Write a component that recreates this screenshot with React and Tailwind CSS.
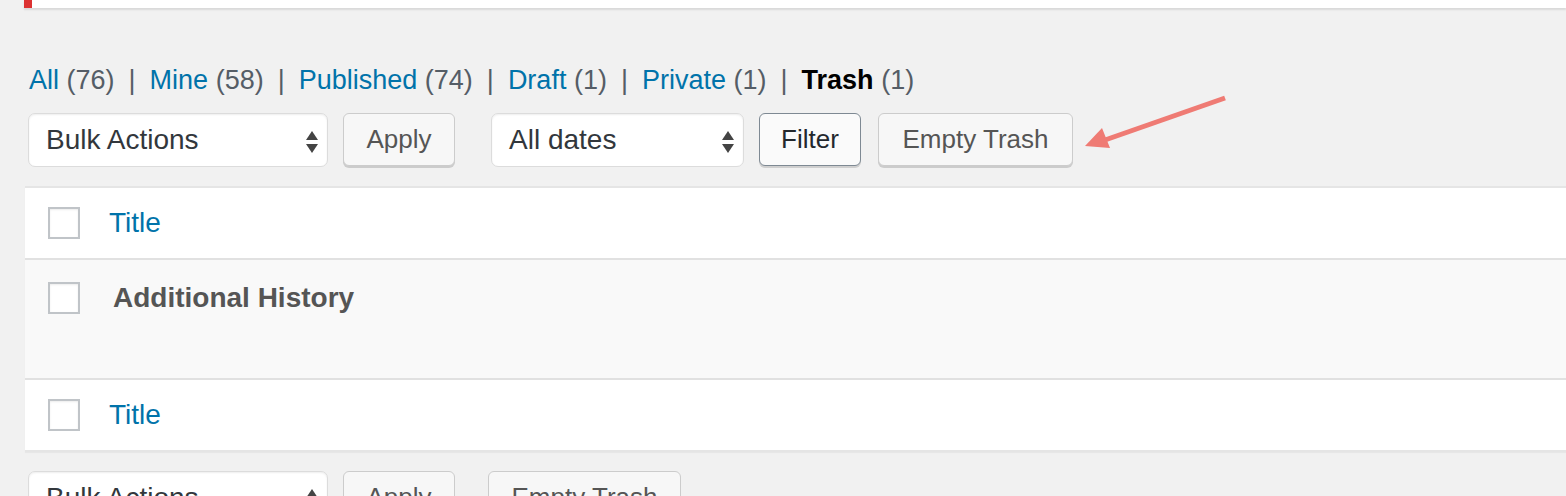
import React from 'react';

const statuses = [
  { label: 'All', count: 76 },
  { label: 'Mine', count: 58 },
  { label: 'Published', count: 74 },
  { label: 'Draft', count: 1 },
  { label: 'Private', count: 1 },
  { label: 'Trash', count: 1, current: true },
];

function Select({ label, width }) {
  return (
    <div
      className={`relative flex h-[54px] items-center rounded-[7px] border border-[#dcdcdc] bg-white pl-[17px] text-[28px] text-[#32373c] shadow-[inset_0_1px_2px_rgba(0,0,0,0.07)] ${width}`}
    >
      {label}
      <svg className="absolute right-[8px] top-[16px]" width="14" height="24" viewBox="0 0 14 24">
        <path d="M7 1 L13 10 L1 10 Z" fill="#444" />
        <path d="M1 14 L13 14 L7 23 Z" fill="#444" />
      </svg>
    </div>
  );
}

function Button({ children, width, focused }) {
  return (
    <div
      className={`flex h-[53px] items-center justify-center rounded-[6px] border text-[26px] ${width} ${
        focused
          ? 'border-[#7e8993] bg-[#fafafa] text-[#23282d] shadow-[0_2px_0_#cfcfcf]'
          : 'border-[#cccccc] bg-[#f7f7f7] text-[#555555] shadow-[0_2px_0_#cccccc]'
      }`}
    >
      {children}
    </div>
  );
}

function Checkbox() {
  return <div className="h-[32px] w-[32px] shrink-0 border-2 border-[#c0c4c8] bg-white shadow-[inset_0_1px_2px_rgba(0,0,0,0.08)]" />;
}

export default function App() {
  return (
    <div className="relative h-[496px] overflow-hidden bg-[#f1f1f1] font-['Liberation_Sans',Arial,sans-serif]">
      {/* notice */}
      <div className="ml-[24px] h-[8px] border-l-[8px] border-[#dc3232] bg-white shadow-[0_2px_2px_rgba(0,0,0,0.1)]" />

      {/* status links */}
      <div className="mt-[54px] flex items-center pl-[29px] text-[27px] leading-[36px]">
        {statuses.map((s, i) => (
          <React.Fragment key={s.label}>
            {i > 0 && <span className="mx-[14px] text-[#555d66]">|</span>}
            <span>
              {s.current ? (
                <span className="font-bold text-black">{s.label}</span>
              ) : (
                <span className="text-[#0073aa]">{s.label}</span>
              )}{' '}
              <span className="text-[#555d66]">({s.count})</span>
            </span>
          </React.Fragment>
        ))}
      </div>

      {/* top actions */}
      <div className="mt-[15px] flex items-start pl-[28px]">
        <Select label="Bulk Actions" width="w-[300px]" />
        <div className="ml-[15px]">
          <Button width="w-[112px]">Apply</Button>
        </div>
        <div className="ml-[36px]">
          <Select label="All dates" width="w-[253px]" />
        </div>
        <div className="ml-[15px]">
          <Button width="w-[102px]" focused>Filter</Button>
        </div>
        <div className="ml-[17px]">
          <Button width="w-[195px]">Empty Trash</Button>
        </div>
      </div>

      {/* table */}
      <div className="ml-[25px] mt-[19px] border-t-2 border-b-2 border-[#e5e5e5] bg-white shadow-[0_1px_1px_rgba(0,0,0,0.04)]">
        <div className="flex h-[70px] items-center pl-[23px]">
          <Checkbox />
          <span className="ml-[29px] text-[28px] text-[#0073aa]">Title</span>
        </div>
        <div className="flex h-[120px] items-start border-t-2 border-[#e1e1e1] bg-[#f9f9f9] pl-[23px] pt-[22px]">
          <Checkbox />
          <span className="ml-[33px] text-[28px] font-bold leading-[32px] text-[#555555]">Additional History</span>
        </div>
        <div className="flex h-[72px] items-center border-t-2 border-[#e1e1e1] pl-[23px]">
          <Checkbox />
          <span className="ml-[29px] text-[28px] text-[#0073aa]">Title</span>
        </div>
      </div>

      {/* bottom actions */}
      <div className="mt-[19px] flex items-start pl-[28px]">
        <Select label="Bulk Actions" width="w-[300px]" />
        <div className="ml-[15px]">
          <Button width="w-[112px]">Apply</Button>
        </div>
        <div className="ml-[33px]">
          <Button width="w-[193px]">Empty Trash</Button>
        </div>
      </div>

      {/* annotation arrow */}
      <svg className="absolute left-[1075px] top-[88px]" width="165" height="70" viewBox="0 0 165 70">
        <line x1="150" y1="10" x2="30" y2="52" stroke="#ef7b74" strokeWidth="5" strokeLinecap="butt" />
        <path d="M10 58 L27 40 L35 60 Z" fill="#ef7b74" />
      </svg>
    </div>
  );
}
